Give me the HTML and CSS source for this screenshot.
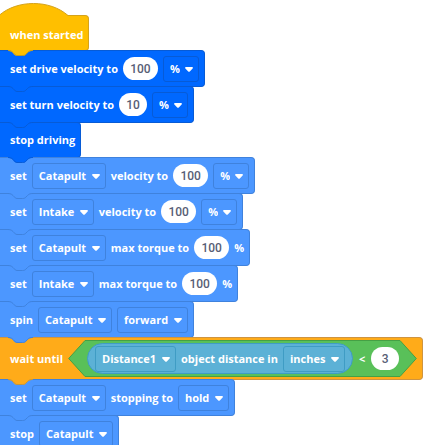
FILE: index.html
```html
<!DOCTYPE html>
<html lang="en">
<head>
<meta charset="utf-8">
<title>Block program</title>
<link rel="stylesheet" href="styles.css">
</head>
<body>
<svg class="defs" aria-hidden="true">
  <symbol id="notch" viewBox="0 0 25 7">
    <path class="notch-fill" d="M1 0V1C3 1 4 2 5 3L6 4.500C7 5.500 8 5.500 9 5.500H15C16.500 5.500 17 5.500 18 4.500L20 2.500C21 1.500 22 1 24 1V0Z"/>
    <path class="notch-line" d="M0 .5C3 .5 4 1.500 5 2.500L6.500 4C7.500 5.500 8.500 5.500 10 5.500H14.500C16.500 5.500 17 5 18 4L19.500 2.500C21 1 22 .5 25 .5"/>
  </symbol>
  <symbol id="caret" viewBox="0 0 8 5">
    <path fill="#fff" d="M1 0H7C8 0 8.200 1 7.600 1.600L4.800 4.500Q4 5.200 3.200 4.500L.4 1.600C-.2 1 0 0 1 0Z"/>
  </symbol>
</svg>
<main class="workspace">
  <div class="hat">
    <svg class="hat-arc" viewBox="0 0 70 14" aria-hidden="true"><path d="M-1 12.500C17 -3.500 50 -3.500 68 12.500V14H-1Z" fill="#ffbf00"/><path d="M-1 12.500C17 -3.500 50 -3.500 68 12.500" fill="none" stroke="#d5a31a"/></svg>
    <div class="block events"><span>when started</span></div>
  </div>

  <div class="block drive">
    <svg class="notch from-events" aria-hidden="true"><use href="#notch"/></svg>
    <label for="drive-velocity">set drive velocity to</label>
    <input class="num wide" id="drive-velocity" value="100">
    <span class="menu"><select aria-label="Drive unit"><option>%</option></select><svg class="caret" aria-hidden="true"><use href="#caret"/></svg></span>
  </div>
  <div class="block drive">
    <svg class="notch from-drive" aria-hidden="true"><use href="#notch"/></svg>
    <label for="turn-velocity">set turn velocity to</label>
    <input class="num" id="turn-velocity" value="10">
    <span class="menu"><select aria-label="Turn unit"><option>%</option></select><svg class="caret" aria-hidden="true"><use href="#caret"/></svg></span>
  </div>
  <div class="block drive plain">
    <svg class="notch from-drive" aria-hidden="true"><use href="#notch"/></svg>
    <span>stop driving</span>
  </div>

  <div class="block motor">
    <svg class="notch from-drive" aria-hidden="true"><use href="#notch"/></svg>
    <label for="m1">set</label>
    <span class="menu"><select id="m1"><option>Catapult</option></select><svg class="caret" aria-hidden="true"><use href="#caret"/></svg></span>
    <label for="v1">velocity to</label>
    <input class="num wide" id="v1" value="100">
    <span class="menu"><select aria-label="Catapult velocity unit"><option>%</option></select><svg class="caret" aria-hidden="true"><use href="#caret"/></svg></span>
  </div>
  <div class="block motor">
    <svg class="notch from-motor" aria-hidden="true"><use href="#notch"/></svg>
    <label for="m2">set</label>
    <span class="menu"><select id="m2"><option>Intake</option></select><svg class="caret" aria-hidden="true"><use href="#caret"/></svg></span>
    <label for="v2">velocity to</label>
    <input class="num wide" id="v2" value="100">
    <span class="menu"><select aria-label="Intake velocity unit"><option>%</option></select><svg class="caret" aria-hidden="true"><use href="#caret"/></svg></span>
  </div>
  <div class="block motor">
    <svg class="notch from-motor" aria-hidden="true"><use href="#notch"/></svg>
    <label for="m3">set</label>
    <span class="menu"><select id="m3"><option>Catapult</option></select><svg class="caret" aria-hidden="true"><use href="#caret"/></svg></span>
    <label for="t1">max torque to</label>
    <input class="num wide" id="t1" value="100">
    <span>%</span>
  </div>
  <div class="block motor">
    <svg class="notch from-motor" aria-hidden="true"><use href="#notch"/></svg>
    <label for="m4">set</label>
    <span class="menu"><select id="m4"><option>Intake</option></select><svg class="caret" aria-hidden="true"><use href="#caret"/></svg></span>
    <label for="t2">max torque to</label>
    <input class="num wide" id="t2" value="100">
    <span>%</span>
  </div>
  <div class="block motor">
    <svg class="notch from-motor" aria-hidden="true"><use href="#notch"/></svg>
    <label for="m5">spin</label>
    <span class="menu"><select id="m5"><option>Catapult</option></select><svg class="caret" aria-hidden="true"><use href="#caret"/></svg></span>
    <span class="menu"><select aria-label="Direction"><option>forward</option></select><svg class="caret" aria-hidden="true"><use href="#caret"/></svg></span>
  </div>

  <div class="block control">
    <svg class="notch from-motor" aria-hidden="true"><use href="#notch"/></svg>
    <span>wait until</span>
    <div class="compare">
      <svg class="cap" viewBox="0 0 17 37" aria-hidden="true"><path d="M17 .5L.7 18.500L17 36.500" fill="#59c059" stroke="#45a045"/></svg>
      <div class="compare-body">
        <div class="sensor">
          <span class="menu"><select aria-label="Sensor"><option>Distance1</option></select><svg class="caret" aria-hidden="true"><use href="#caret"/></svg></span>
          <label for="unit">object distance in</label>
          <span class="menu"><select id="unit"><option>inches</option></select><svg class="caret" aria-hidden="true"><use href="#caret"/></svg></span>
        </div>
        <label for="limit">&lt;</label>
        <input class="num" id="limit" value="3">
      </div>
      <svg class="cap" viewBox="0 0 17 37" aria-hidden="true"><path d="M0 .5L16.300 18.500L0 36.500" fill="#59c059" stroke="#45a045"/></svg>
    </div>
  </div>

  <div class="block motor">
    <svg class="notch from-control" aria-hidden="true"><use href="#notch"/></svg>
    <label for="m6">set</label>
    <span class="menu"><select id="m6"><option>Catapult</option></select><svg class="caret" aria-hidden="true"><use href="#caret"/></svg></span>
    <label for="stopping">stopping to</label>
    <span class="menu"><select id="stopping"><option>hold</option></select><svg class="caret" aria-hidden="true"><use href="#caret"/></svg></span>
  </div>
  <div class="block motor">
    <svg class="notch from-motor" aria-hidden="true"><use href="#notch"/></svg>
    <label for="m7">stop</label>
    <span class="menu"><select id="m7"><option>Catapult</option></select><svg class="caret" aria-hidden="true"><use href="#caret"/></svg></span>
  </div>
</main>
</body>
</html>
```
FILE: styles.css
```css
* { box-sizing: border-box; }

body {
  margin: 0;
  background: #fff;
  color: #fff;
  font: 700 11px/16px "Open Sans", "Noto Sans", sans-serif;
}

.defs { position: absolute; width: 0; height: 0; }

.workspace {
  display: flex;
  flex-direction: column;
  align-items: flex-start;
  height: 100vh;
  padding-top: 3px;
  overflow: hidden;
}

.block {
  position: relative;
  flex: none;
  display: flex;
  align-items: center;
  gap: 5px;
  height: 37px;
  margin-bottom: -1px;
  padding: 0 5px 0 10px;
  border: 1px solid;
  border-left: 0;
  border-radius: 0 4px 4px 0;
  white-space: nowrap;
}

.events { background: #ffbf00; border-color: #d5a31a; padding-top: 3px; }
.drive { background: #0068ff; border-color: #075bd6; }
.motor { background: #4c97ff; border-color: #3f82dd; }
.control { background: #ffab19; border-color: #cf9440; height: 43px; }
.plain { height: 36px; }

.hat { flex: none; margin-bottom: -1px; }
.hat .block { height: 36px; margin: -2px 0 0; }
.hat-arc { position: relative; z-index: 1; display: block; width: 70px; height: 14px; }

.notch { position: absolute; top: -1px; left: 8px; width: 25px; height: 7px; }
.notch-fill { fill: var(--fill); }
.notch-line { fill: none; stroke: var(--line); }
.from-events { --fill: #ffbf00; --line: #c19c22; }
.from-drive { --fill: #0068ff; --line: #075bd6; }
.from-motor { --fill: #4c97ff; --line: #3f82dd; }
.from-control { --fill: #ffab19; --line: #c2953f; }

.num {
  width: 28px;
  height: 23px;
  padding: 0;
  border: 0;
  border-radius: 12px;
  background: #fff;
  color: #575e75;
  font: 500 12px/16px Roboto, sans-serif;
  text-align: center;
}
.num.wide { width: 35px; }

.menu { position: relative; display: flex; }
.menu select {
  appearance: none;
  height: 26px;
  margin: 0;
  padding: 0 18px 0 6px;
  border: 1px solid #3f82dd;
  border-radius: 3px;
  background: transparent;
  color: inherit;
  font: inherit;
}
.drive .menu select { border-color: #075bd6; }
.caret { position: absolute; right: 6px; top: 11px; width: 8px; height: 5px; pointer-events: none; }

.compare { display: flex; }
.cap { display: block; width: 17px; height: 37px; }
.compare-body {
  display: flex;
  align-items: center;
  gap: 6px;
  padding: 0 1px 0 2px;
  background: #59c059;
  border: solid #45a045;
  border-width: 1px 0;
}
.sensor {
  display: flex;
  align-items: center;
  gap: 5px;
  height: 31px;
  padding: 0 7px;
  background: #5cb1d6;
  border: 1px solid #3f9cc4;
  border-radius: 16px;
}
.sensor .menu select { border-color: #3f9cc4; }
```
